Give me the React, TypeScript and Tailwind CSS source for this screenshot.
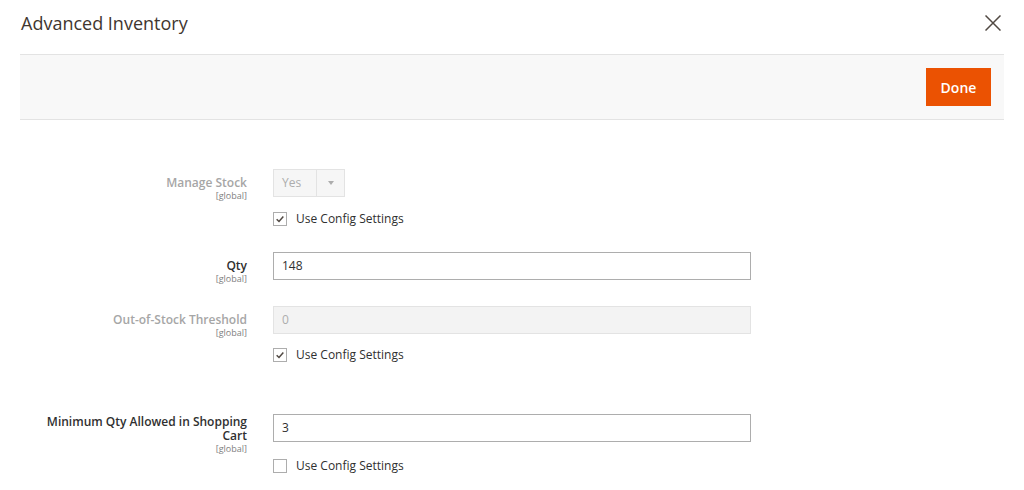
function Scope() {
  return <div className="text-[9px] leading-[12px] text-[#808080]">[global]</div>;
}

function ConfigCheck({ checked, className }: { checked: boolean; className: string }) {
  return (
    <label className={`flex items-center gap-[9px] ${className}`}>
      <span className="flex h-[14px] w-[14px] items-center justify-center border border-[#adadad] bg-white">
        {checked && (
          <svg viewBox="0 0 12 12" className="h-[10px] w-[10px]">
            <path d="M2 6.2 L4.8 9 L10 3" fill="none" stroke="#514943" strokeWidth="1.8" />
          </svg>
        )}
      </span>
      <span className="text-[12px] leading-[14px] text-[#303030]">Use Config Settings</span>
    </label>
  );
}

export default function App() {
  return (
    <div className="min-h-[490px] bg-white px-[20px] font-['Open_Sans',sans-serif]">
      {/* Header */}
      <div className="flex h-[54px] items-start justify-between pt-[9px]">
        <h1 className="pl-[1px] text-[18px] leading-[28px] font-normal text-[#41362f]">
          Advanced Inventory
        </h1>
        <button className="mr-[3px] mt-[6px] text-[#514943]">
          <svg viewBox="0 0 16 16" className="h-[16px] w-[16px]">
            <path d="M0.5 0.5 L15.5 15.5 M15.5 0.5 L0.5 15.5" stroke="currentColor" strokeWidth="1.5" />
          </svg>
        </button>
      </div>

      {/* Toolbar */}
      <div className="flex h-[66px] items-center justify-end border-y border-[#e3e3e3] bg-[#f8f8f8] pr-[13px]">
        <button className="h-[38px] w-[65px] border border-[#eb5202] bg-[#eb5202] text-[14px] font-semibold text-white">
          Done
        </button>
      </div>

      {/* Form */}
      <div className="pl-[17px] pt-[49px]">
        {/* Manage Stock */}
        <div className="flex items-start">
          <div className="w-[210px] pt-[7px] text-right">
            <div className="text-[12px] leading-[14px] font-semibold text-[#a6a6a6]">Manage Stock</div>
            <Scope />
          </div>
          <div className="ml-[26px] w-[478px]">
            <div className="flex h-[28px] w-[72px] border border-[#e3e3e3] bg-[#f6f6f6] text-[12px] text-[#adadad]">
              <span className="flex flex-1 items-center pl-[8px]">Yes</span>
              <span className="flex w-[28px] items-center justify-center border-l border-[#e3e3e3]">
                <svg viewBox="0 0 6 4" className="h-[4px] w-[6px]">
                  <path d="M0 0 H6 L3 4 Z" fill="#adadad" />
                </svg>
              </span>
            </div>
            <ConfigCheck checked className="mt-[15px]" />
          </div>
        </div>

        {/* Qty */}
        <div className="mt-[26px] flex items-start">
          <div className="w-[210px] pt-[7px] text-right">
            <div className="text-[12px] leading-[14px] font-semibold text-[#303030]">Qty</div>
            <Scope />
          </div>
          <div className="ml-[26px] w-[478px]">
            <div className="flex h-[28px] items-center border border-[#adadad] bg-white pl-[8px] text-[12px] text-[#303030]">
              148
            </div>
          </div>
        </div>

        {/* Out-of-Stock Threshold */}
        <div className="mt-[21px] flex items-start">
          <div className="w-[210px] pt-[7px] text-right">
            <div className="text-[12px] leading-[14px] font-semibold text-[#a6a6a6]">Out-of-Stock Threshold</div>
            <Scope />
          </div>
          <div className="ml-[26px] w-[478px]">
            <div className="flex h-[28px] items-center border border-[#e3e3e3] bg-[#f3f3f3] pl-[8px] text-[12px] text-[#adadad]">
              0
            </div>
            <ConfigCheck checked className="mt-[14px]" />
          </div>
        </div>

        {/* Minimum Qty */}
        <div className="mt-[52px] flex items-start">
          <div className="w-[210px] pt-[1px] text-right">
            <div className="text-[12px] leading-[14px] font-semibold text-[#303030]">
              Minimum Qty Allowed in Shopping Cart
            </div>
            <Scope />
          </div>
          <div className="ml-[26px] w-[478px]">
            <div className="flex h-[28px] items-center border border-[#adadad] bg-white pl-[8px] text-[12px] text-[#303030]">
              3
            </div>
            <ConfigCheck checked={false} className="mt-[17px]" />
          </div>
        </div>
      </div>
    </div>
  );
}
